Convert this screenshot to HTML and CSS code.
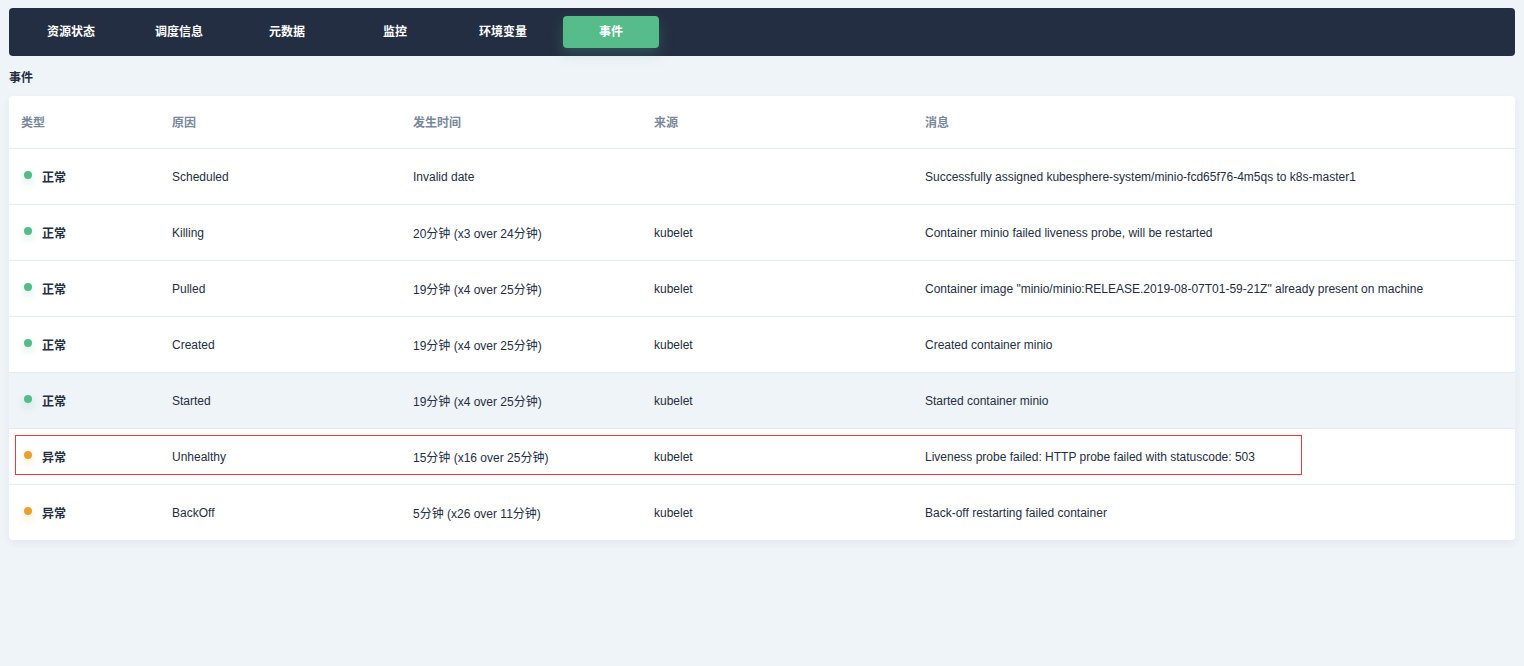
FILE: index.html
```html
<!DOCTYPE html>
<html lang="zh">
<head>
<meta charset="utf-8">
<title>事件</title>
<link rel="stylesheet" href="styles.css">
</head>
<body>
<nav class="tabs">
  <div class="tab">资源状态</div>
  <div class="tab">调度信息</div>
  <div class="tab">元数据</div>
  <div class="tab">监控</div>
  <div class="tab">环境变量</div>
  <div class="tab active">事件</div>
</nav>
<div class="section-title">事件</div>
<div class="card">
  <div class="row head">
    <div class="cell">类型</div>
    <div class="cell">原因</div>
    <div class="cell">发生时间</div>
    <div class="cell">来源</div>
    <div class="cell">消息</div>
  </div>
  <div class="row">
    <div class="cell type"><span class="dot ok"></span>正常</div>
    <div class="cell">Scheduled</div>
    <div class="cell">Invalid date</div>
    <div class="cell"></div>
    <div class="cell">Successfully assigned kubesphere-system/minio-fcd65f76-4m5qs to k8s-master1</div>
  </div>
  <div class="row">
    <div class="cell type"><span class="dot ok"></span>正常</div>
    <div class="cell">Killing</div>
    <div class="cell">20分钟 (x3 over 24分钟)</div>
    <div class="cell">kubelet</div>
    <div class="cell">Container minio failed liveness probe, will be restarted</div>
  </div>
  <div class="row">
    <div class="cell type"><span class="dot ok"></span>正常</div>
    <div class="cell">Pulled</div>
    <div class="cell">19分钟 (x4 over 25分钟)</div>
    <div class="cell">kubelet</div>
    <div class="cell">Container image "minio/minio:RELEASE.2019-08-07T01-59-21Z" already present on machine</div>
  </div>
  <div class="row">
    <div class="cell type"><span class="dot ok"></span>正常</div>
    <div class="cell">Created</div>
    <div class="cell">19分钟 (x4 over 25分钟)</div>
    <div class="cell">kubelet</div>
    <div class="cell">Created container minio</div>
  </div>
  <div class="row hover">
    <div class="cell type"><span class="dot ok"></span>正常</div>
    <div class="cell">Started</div>
    <div class="cell">19分钟 (x4 over 25分钟)</div>
    <div class="cell">kubelet</div>
    <div class="cell">Started container minio</div>
  </div>
  <div class="row marked">
    <div class="cell type"><span class="dot warn"></span>异常</div>
    <div class="cell">Unhealthy</div>
    <div class="cell">15分钟 (x16 over 25分钟)</div>
    <div class="cell">kubelet</div>
    <div class="cell">Liveness probe failed: HTTP probe failed with statuscode: 503</div>
    <div class="highlight"></div>
  </div>
  <div class="row last">
    <div class="cell type"><span class="dot warn"></span>异常</div>
    <div class="cell">BackOff</div>
    <div class="cell">5分钟 (x26 over 11分钟)</div>
    <div class="cell">kubelet</div>
    <div class="cell">Back-off restarting failed container</div>
  </div>
</div>
</body>
</html>
```
FILE: styles.css
```css
* { box-sizing: border-box; }
html, body { margin: 0; }
body {
  background: #eff4f9;
  padding: 8px 9px;
  font-family: "Liberation Sans", "Noto Sans CJK SC", sans-serif;
  font-size: 12px;
  color: #242e42;
}
.tabs {
  display: flex;
  gap: 12px;
  height: 48px;
  padding: 8px 14px;
  background: #242e42;
  border-radius: 4px;
}
.tab {
  width: 96px;
  height: 32px;
  line-height: 33px;
  text-align: center;
  color: #ffffff;
  font-weight: 600;
  border-radius: 4px;
}
.tab.active {
  background: #55bc8a;
  box-shadow: 0 6px 14px rgba(85, 188, 138, 0.25);
}
.section-title {
  height: 40px;
  padding-top: 15px;
  line-height: 14px;
  font-weight: 700;
  color: #242e42;
}
.card {
  background: #ffffff;
  border-radius: 4px;
  box-shadow: 0 4px 8px rgba(36, 46, 66, 0.06);
}
.row {
  position: relative;
  display: grid;
  grid-template-columns: 151px 241px 241px 271px 1fr;
  height: 56px;
  align-items: center;
  border-bottom: 1px solid #e3e9ef;
}
.row.head {
  height: 53px;
  padding-bottom: 1px;
  color: #79879c;
  font-weight: 600;
}
.row.hover { background: #eff4f9; }
.row.last { border-bottom: none; height: 55px; }
.cell {
  padding-left: 12px;
  white-space: nowrap;
}
.cell.type {
  display: flex;
  align-items: center;
  font-weight: 700;
  padding-left: 15px;
}
.dot {
  width: 8px;
  height: 8px;
  border-radius: 50%;
  margin-right: 10px;
  margin-top: -3px;
}
.dot.ok {
  background: #55bc8a;
  box-shadow: 0 4px 8px rgba(85, 188, 138, 0.3);
}
.dot.warn {
  background: #e8a030;
  box-shadow: 0 4px 8px rgba(245, 166, 35, 0.3);
}
.highlight {
  position: absolute;
  left: 6px;
  top: 6px;
  width: 1287px;
  height: 40px;
  border: 1px solid #f0383a;
  pointer-events: none;
}
```
